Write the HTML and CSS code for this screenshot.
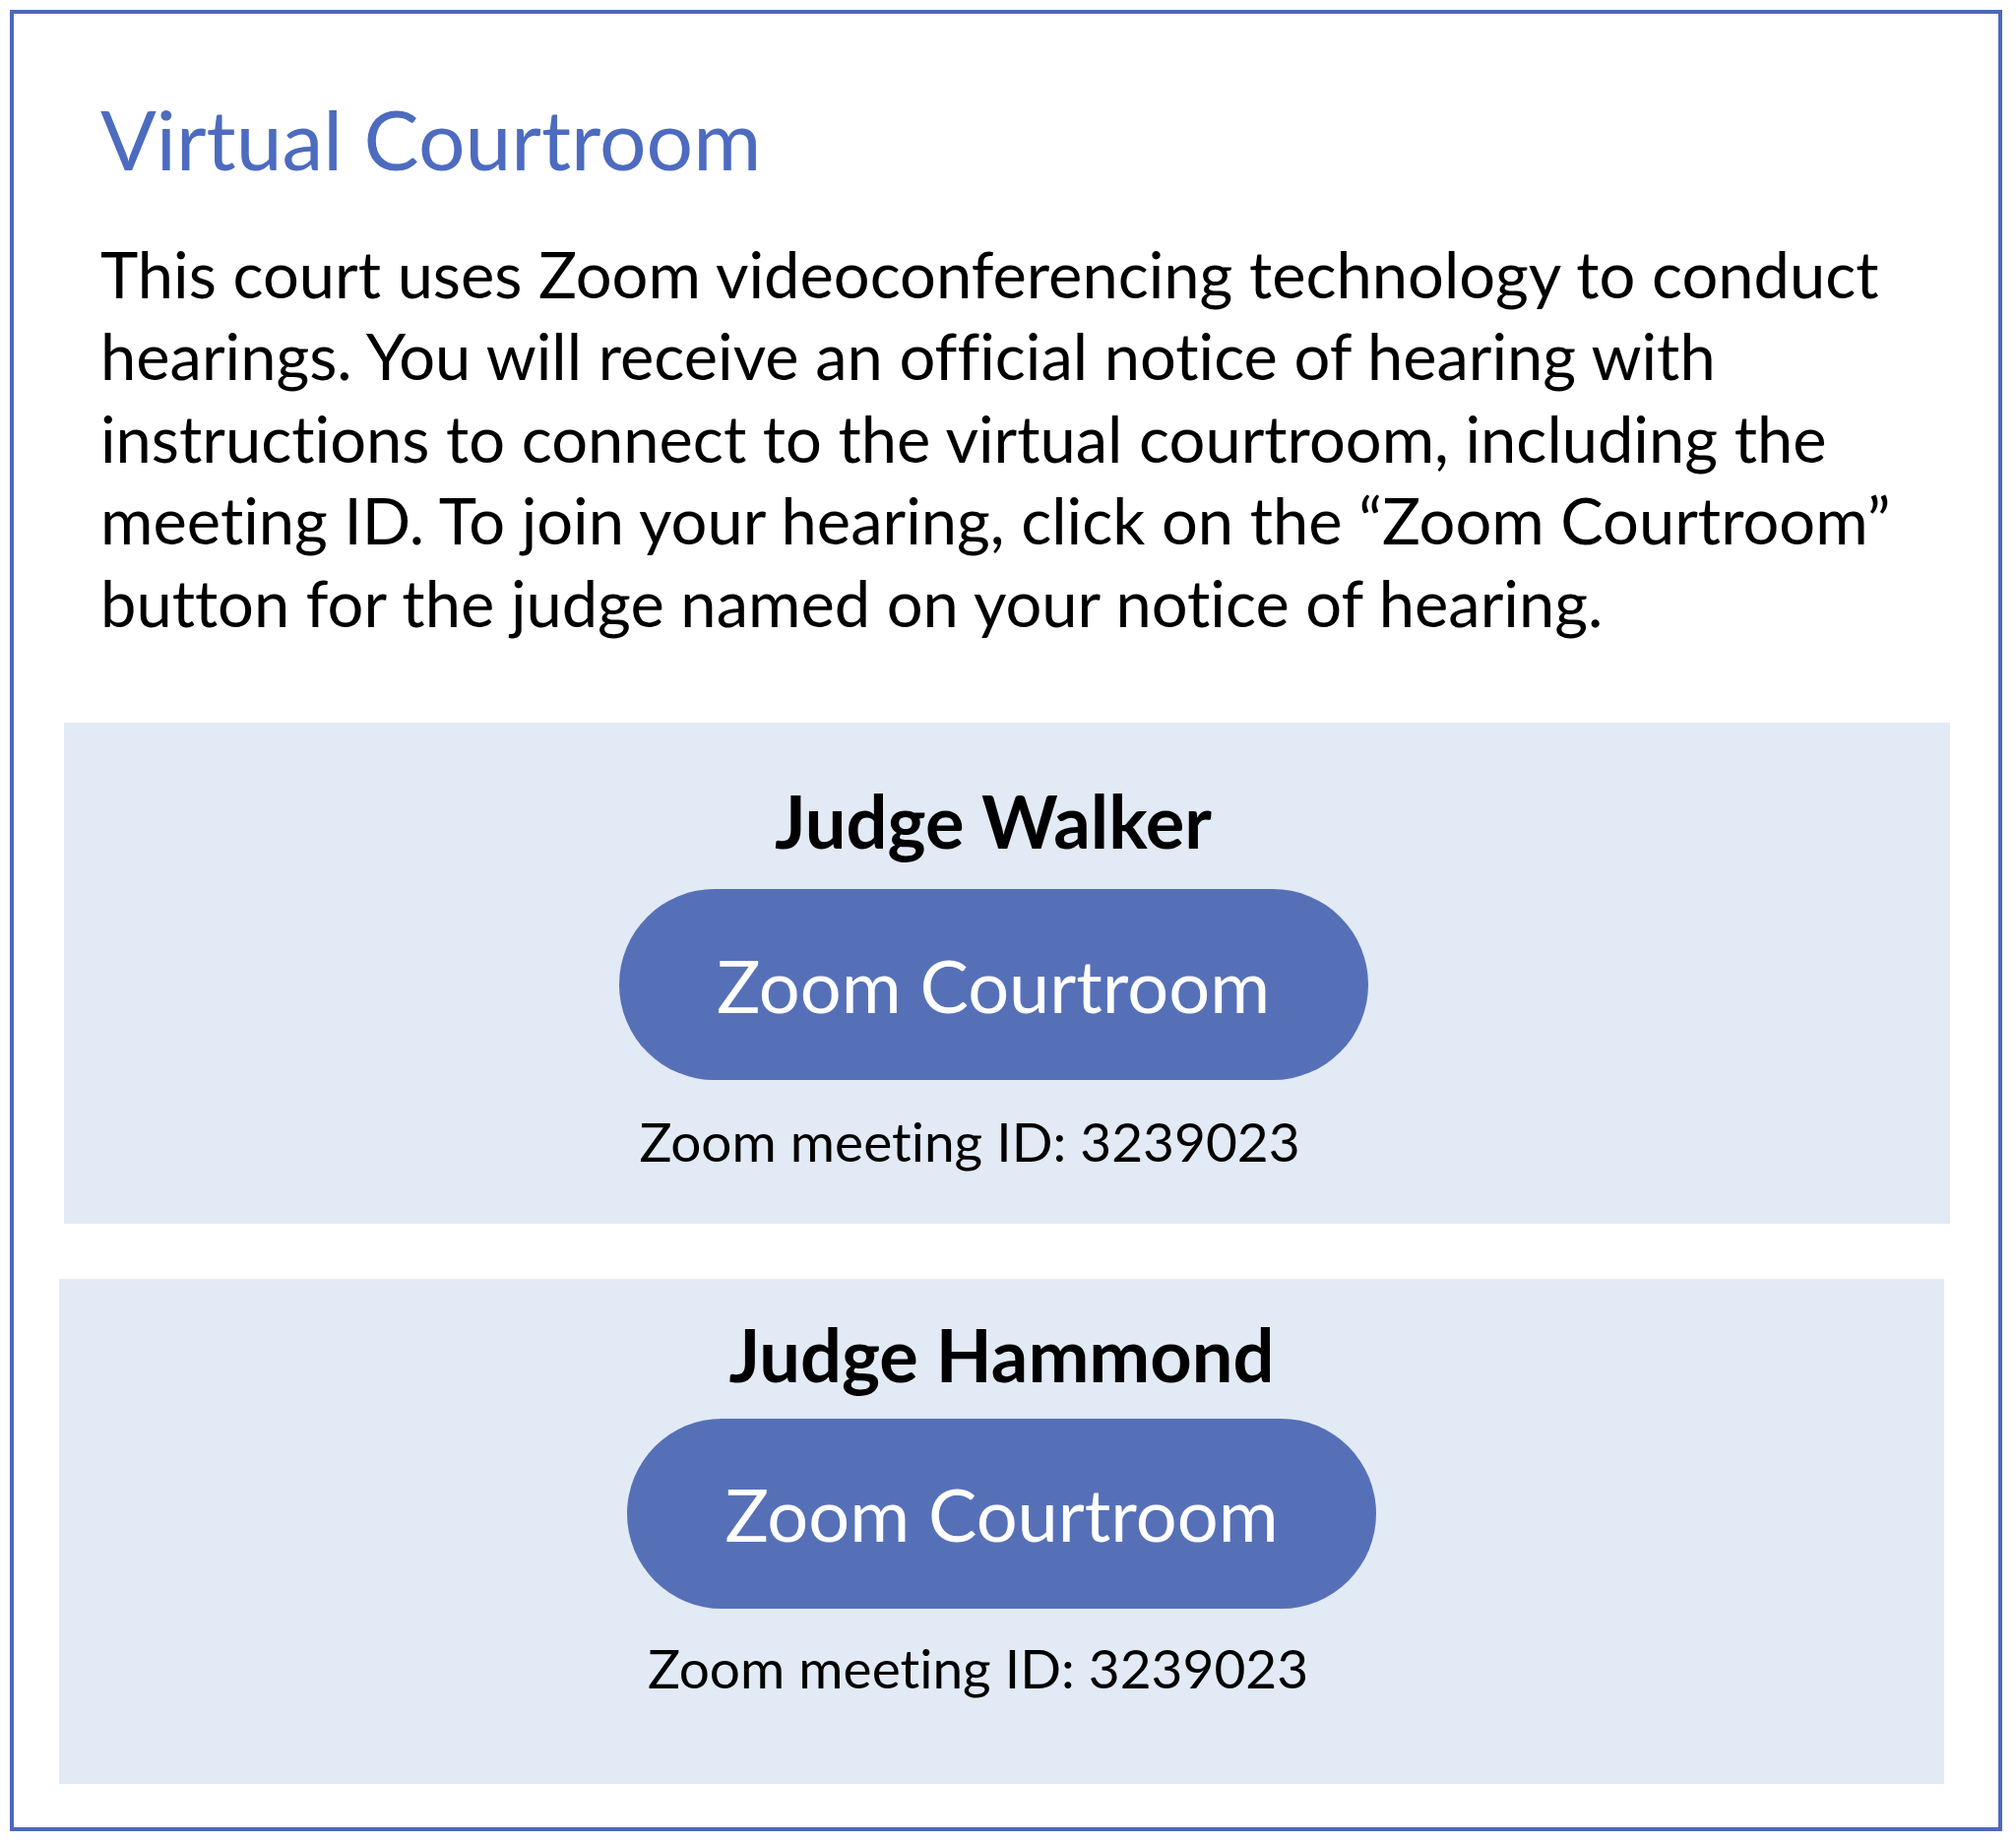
FILE: index.html
```html
<!DOCTYPE html>
<html lang="en">
<head>
<meta charset="utf-8">
<title>Virtual Courtroom</title>
<link rel="stylesheet" href="styles.css">
</head>
<body>
<main class="frame">
  <section class="intro">
    <h1 class="title">Virtual Courtroom</h1>
    <p class="lead">This court uses Zoom videoconferencing technology to conduct<br>hearings. You will receive an official notice of hearing with<br>instructions to connect to the virtual courtroom, including the<br>meeting ID. To join your hearing, click on the “Zoom Courtroom”<br>button for the judge named on your notice of hearing.</p>
  </section>
  <section class="judge judge-walker">
    <h2 class="judge-name">Judge Walker</h2>
    <a class="join-btn" href="#">Zoom Courtroom</a>
    <p class="meeting-id">Zoom meeting ID: 3239023</p>
  </section>
  <section class="judge judge-hammond">
    <h2 class="judge-name">Judge Hammond</h2>
    <a class="join-btn" href="#">Zoom Courtroom</a>
    <p class="meeting-id">Zoom meeting ID: 3239023</p>
  </section>
</main>
</body>
</html>
```

FILE: styles.css
```css
html, body {
  margin: 0;
  padding: 0;
  background: #ffffff;
}

body {
  font-family: Lato, "Open Sans", "Liberation Sans", sans-serif;
  font-variant-ligatures: no-common-ligatures;
  color: #000000;
}

.frame {
  box-sizing: border-box;
  width: 2024px;
  height: 1850px;
  margin: 10px 0 0 10px;
  border: 4px solid #4e68bb;
  padding-top: 77px;
  display: flex;
  flex-direction: column;
}

.intro {
  padding: 0 40px 0 88px;
}

.title {
  margin: 0;
  font-size: 84px;
  line-height: 1.2;
  font-weight: 400;
  color: #4d6bbf;
  white-space: nowrap;
}

.lead {
  margin: 45px 0 0 0;
  font-size: 65px;
  line-height: 83.5px;
  white-space: nowrap;
}

.judge {
  background: #e2eaf5;
  display: flex;
  flex-direction: column;
  align-items: center;
}

.judge-walker {
  margin: 80px 49px 0 51px;
  height: 509px;
  box-sizing: border-box;
  padding: 56px 28px 0 0;
}

.judge-hammond {
  margin: 56px 55px 0 46px;
  height: 513px;
  box-sizing: border-box;
  padding: 33px 0 0 0;
}

.judge-name {
  margin: 0;
  font-size: 74px;
  line-height: 1.2;
  font-weight: 700;
  white-space: nowrap;
}

.join-btn {
  display: flex;
  align-items: center;
  justify-content: center;
  width: 761px;
  height: 194px;
  border-radius: 97px;
  background: #5670b8;
  color: #ffffff;
  font-size: 74px;
  text-decoration: none;
  white-space: nowrap;
}

.judge-walker .join-btn {
  margin-top: 24px;
}

.judge-hammond .join-btn {
  margin-top: 20px;
  height: 193px;
}

.meeting-id {
  margin: 29px 0 0 0;
  padding-right: 48px;
  font-size: 55px;
  line-height: 1.2;
  white-space: nowrap;
}

.judge-hammond .meeting-id {
  margin-top: 27px;
}
```
